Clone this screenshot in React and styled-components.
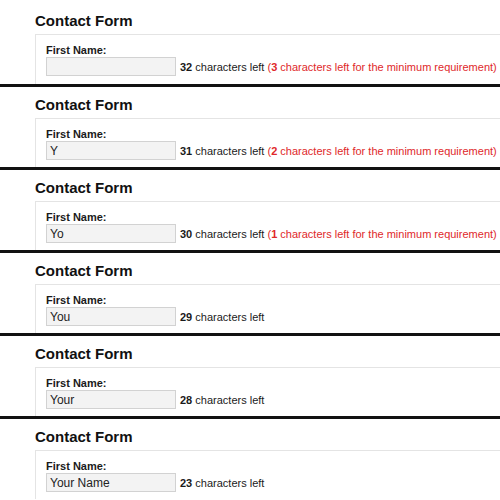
import styled, { createGlobalStyle } from "styled-components";

const GlobalStyle = createGlobalStyle`
  html, body {
    margin: 0;
    padding: 0;
    background: #fff;
    font-family: "Liberation Sans", Arial, sans-serif;
  }
`;

const STATES = [
  { value: "", left: 32, min: 3 },
  { value: "Y", left: 31, min: 2 },
  { value: "Yo", left: 30, min: 1 },
  { value: "You", left: 29, min: 0 },
  { value: "Your", left: 28, min: 0 },
  { value: "Your Name", left: 23, min: 0 },
];

const Page = styled.div`
  width: 500px;
  height: 500px;
  overflow: hidden;
  display: flex;
  flex-direction: column;
`;

const Panel = styled.section`
  height: ${(p) => (p.$first ? 84 : 80)}px;
  border-bottom: ${(p) => (p.$last ? "none" : "3px solid #111")};
  display: flex;
  flex-direction: column;
  padding-left: 35px;
  box-sizing: content-box;
  flex-shrink: 0;
`;

const Title = styled.h2`
  margin: ${(p) => (p.$first ? "12px" : "9px")} 0 0 0;
  font-size: 15px;
  font-weight: bold;
  color: #111;
  line-height: 18px;
`;

const Box = styled.div`
  flex: 1;
  margin-top: 4px;
  border-top: 1px solid #e4e4e4;
  border-left: 1px solid #e4e4e4;
  padding: 8px 0 0 10px;
`;

const Label = styled.div`
  font-size: 11px;
  font-weight: bold;
  color: #1a1a1a;
  line-height: 14px;
`;

const Row = styled.div`
  display: flex;
  align-items: center;
  margin-top: 0;
  white-space: nowrap;
`;

const Input = styled.input`
  width: 130px;
  height: 19px;
  box-sizing: border-box;
  border: 1px solid #d2d2d2;
  background: #f3f3f3;
  font-family: "Liberation Sans", Arial, sans-serif;
  font-size: 12px;
  color: #222;
  padding: 0 3px;
  outline: none;
`;

const Counter = styled.span`
  margin-left: 4px;
  font-size: 11px;
  color: #1a1a1a;
`;

const Num = styled.b`
  font-weight: bold;
`;

const Warn = styled.span`
  color: #e0282a;
`;

export default function App() {
  return (
    <Page>
      <GlobalStyle />
      {STATES.map((s, i) => (
        <Panel key={i} $first={i === 0} $last={i === STATES.length - 1}>
          <Title $first={i === 0}>Contact Form</Title>
          <Box>
            <Label>First Name:</Label>
            <Row>
              <Input readOnly value={s.value} />
              <Counter>
                <Num>{s.left}</Num> characters left
                {s.min > 0 && (
                  <Warn>
                    {" "}(<Num>{s.min}</Num> characters left for the minimum requirement)
                  </Warn>
                )}
              </Counter>
            </Row>
          </Box>
        </Panel>
      ))}
    </Page>
  );
}
